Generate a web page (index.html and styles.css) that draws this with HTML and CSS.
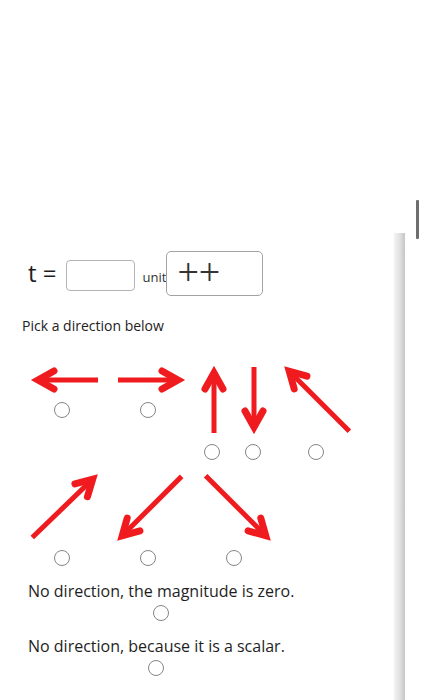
FILE: index.html
```html
<!DOCTYPE html>
<html>
<head>
<meta charset="utf-8">
<link rel="stylesheet" href="styles.css">
</head>
<body>
<div class="page">
  <div class="panel">
    <div class="content">
      <div class="answer-row">
        <span class="var">t =</span>
        <input class="num" type="text">
        <span class="unit">unit</span>
        <div class="unit-box">++</div>
      </div>
      <p class="prompt">Pick a direction below</p>
      <div class="choices row1">
        <label class="item w86">
          <svg class="arrow" width="86" height="36"><g transform="translate(13 18) rotate(180)"><line x1="-66" y1="0" x2="-6" y2="0"/><polyline points="-22,-9 -6,0 -22,9"/></g></svg>
          <input class="radio short" type="radio" name="dir">
        </label>
        <label class="item w86">
          <svg class="arrow" width="86" height="36"><g transform="translate(79 18)"><line x1="-66" y1="0" x2="-6" y2="0"/><polyline points="-22,-9 -6,0 -22,9"/></g></svg>
          <input class="radio short" type="radio" name="dir">
        </label>
        <label class="item w42">
          <svg class="arrow" width="42" height="76"><g transform="translate(23 5) rotate(-90)"><line x1="-66" y1="0" x2="-6" y2="0"/><polyline points="-22,-9 -6,0 -22,9"/></g></svg>
          <input class="radio tall" type="radio" name="dir">
        </label>
        <label class="item w40">
          <svg class="arrow" width="40" height="76"><g transform="translate(21 71) rotate(90)"><line x1="-66" y1="0" x2="-6" y2="0"/><polyline points="-22,-9 -6,0 -22,9"/></g></svg>
          <input class="radio tall" type="radio" name="dir">
        </label>
        <label class="item w86">
          <svg class="arrow" width="86" height="76"><g transform="translate(12 5) rotate(-135)"><line x1="-91" y1="0" x2="-6" y2="0"/><polyline points="-22,-9 -6,0 -22,9"/></g></svg>
          <input class="radio tall" type="radio" name="dir">
        </label>
      </div>
      <div class="choices row2">
        <label class="item w86">
          <svg class="arrow" width="86" height="76"><g transform="translate(78 5) rotate(-44)"><line x1="-90" y1="0" x2="-6" y2="0"/><polyline points="-22,-9 -6,0 -22,9"/></g></svg>
          <input class="radio short" type="radio" name="dir">
        </label>
        <label class="item w86">
          <svg class="arrow" width="86" height="76"><g transform="translate(13 70) rotate(135)"><line x1="-90" y1="0" x2="-6" y2="0"/><polyline points="-22,-9 -6,0 -22,9"/></g></svg>
          <input class="radio short" type="radio" name="dir">
        </label>
        <label class="item w86">
          <svg class="arrow" width="86" height="76"><g transform="translate(79 70) rotate(45)"><line x1="-91" y1="0" x2="-6" y2="0"/><polyline points="-22,-9 -6,0 -22,9"/></g></svg>
          <input class="radio short" type="radio" name="dir">
        </label>
      </div>
      <label class="option first">No direction, the magnitude is zero.
        <input class="radio" type="radio" name="dir">
      </label>
      <label class="option second">No direction, because it is a scalar.
        <input class="radio" type="radio" name="dir">
      </label>
    </div>
    <div class="edge"></div>
  </div>
  <div class="marker"></div>
</div>
</body>
</html>
```

FILE: styles.css
```css
html, body {
  margin: 0;
  padding: 0;
  background: #ffffff;
}

body {
  font-family: "Open Sans", "Noto Sans", sans-serif;
  color: #222222;
  width: 424px;
  height: 700px;
  overflow: hidden;
}

.page {
  display: flex;
  align-items: flex-start;
  padding-top: 200px;
}

.panel {
  display: flex;
  width: 405px;
  min-height: 467px;
  margin-top: 33px;
}

.content {
  flex: 1;
  padding-left: 22px;
  padding-top: 18px;
}

.edge {
  width: 11px;
  background: linear-gradient(to right, #f3f3f3 0%, #e2e2e2 50%, #c6c6c6 100%);
}

.marker {
  width: 3px;
  height: 39px;
  margin-left: 11px;
  background: #6e6e6e;
  border-radius: 1px;
}

.answer-row {
  display: flex;
  align-items: flex-start;
  margin-left: 6px;
}

.var {
  font-size: 24px;
  line-height: 32px;
  margin-top: 6px;
  color: #1e1e1e;
}

.num {
  box-sizing: border-box;
  width: 69px;
  height: 31px;
  margin: 9px 0 0 9px;
  border: 1px solid #b4b4b4;
  border-radius: 4px;
  padding: 0;
  background: #fff;
}

.unit {
  font-size: 13px;
  line-height: 18px;
  margin: 17px 0 0 8px;
  color: #333;
}

.unit-box {
  box-sizing: border-box;
  width: 97px;
  height: 45px;
  border: 1px solid #a3a3a3;
  border-radius: 5px;
  padding-left: 10px;
  font-family: "Liberation Serif", serif;
  font-size: 38px;
  line-height: 40px;
  color: #333;
}

.prompt {
  margin: 20px 0 0 0;
  font-size: 14px;
  line-height: 19px;
  color: #222;
}

.choices {
  display: flex;
  align-items: flex-start;
  margin-left: -3px;
}

.row1 {
  margin-top: 27px;
}

.row2 {
  margin-top: 10px;
}

.item {
  display: flex;
  flex-direction: column;
  align-items: center;
}

.w86 { width: 86px; }
.w42 { width: 42px; }
.w40 { width: 40px; }

.arrow {
  display: block;
}

.arrow line {
  stroke: #ef1b1f;
  stroke-width: 5;
}

.arrow polyline {
  fill: none;
  stroke: #ef1b1f;
  stroke-width: 7;
  stroke-linejoin: miter;
  stroke-linecap: round;
}

.radio {
  -webkit-appearance: none;
  appearance: none;
  box-sizing: border-box;
  display: block;
  width: 16px;
  height: 16px;
  margin: 0;
  border: 1.5px solid #858585;
  border-radius: 50%;
  background: #fff;
}

.radio.short {
  margin-top: 4px;
}

.radio.tall {
  margin-top: 6px;
}

.option {
  display: flex;
  flex-direction: column;
  align-items: center;
  width: max-content;
  margin-left: 6px;
  font-size: 16px;
  line-height: 21px;
  color: #1e1e1e;
}

.option .radio {
  margin-top: 3px;
}

.option.first {
  margin-top: 15px;
}

.option.second {
  margin-top: 15px;
}
```
